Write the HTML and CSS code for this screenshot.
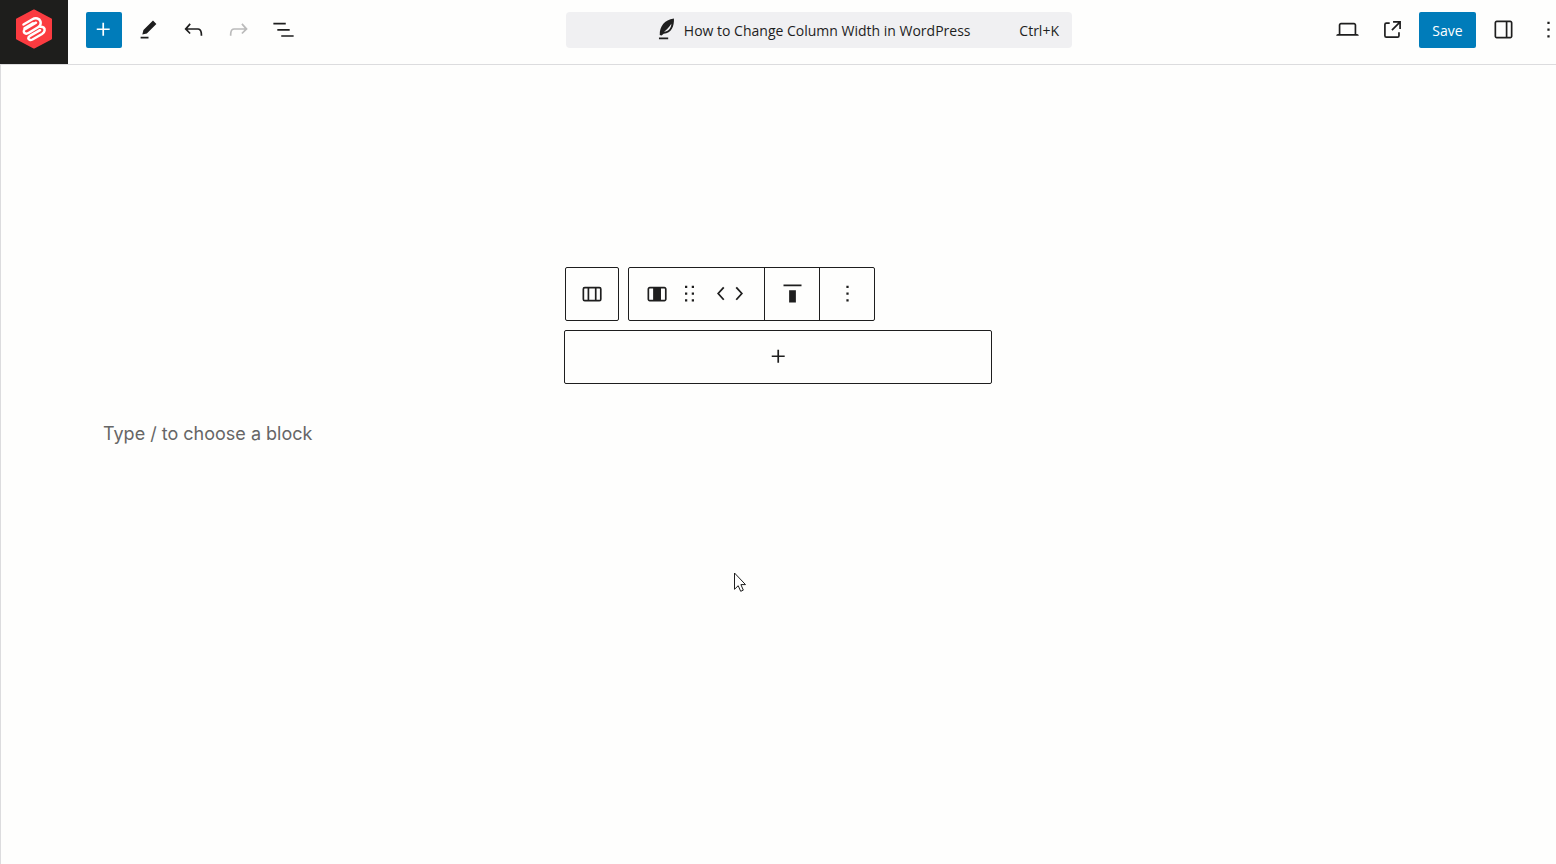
FILE: index.html
```
<!DOCTYPE html>
<html lang="en">
<head>
<meta charset="UTF-8">
<meta name="viewport" content="width=device-width, initial-scale=1">
<title>How to Change Column Width in WordPress</title>
<link rel="stylesheet" href="styles.css">
</head>
<body>

<header class="header">
    <a class="logo" href="#" aria-label="View posts">
        <svg viewBox="0 0 40 40" width="40" height="40">
            <path fill="#fb3b40" stroke="#fb3b40" stroke-width="2" stroke-linejoin="round" d="M20 1.500 37 10.500V29.500L20 38.500 3 29.500V10.500z"/>
            <path fill="none" stroke="#fff" stroke-width="2.500" stroke-linecap="round" stroke-linejoin="round" d="M9.500 15.500 18 10.500C22 8.300 25.500 9.500 26.500 12.500C27.200 15 26 17 24 18.200L14.500 24C12.500 25.200 10.200 24.600 9.800 22.800C9.500 21.400 10.300 20.600 11.500 19.800L22 13.700M10.500 19.300 19 14.200M26 17.700C29 17.300 31 19 30.600 21.500C30.300 23.300 29.300 24.200 28 25L18.500 30.500C16.500 31.500 14.500 30.800 14.300 29.300C14.200 28.200 15 27.500 16 26.900L26 21.200"/>
        </svg>
    </a>
    <div class="tools">
        <button class="btn primary" aria-label="Add block"><svg viewBox="0 0 24 24"><path d="M11 12.500V17.500H12.500V12.500H17.500V11H12.500V6H11V11H6V12.500H11Z"/></svg></button>
        <button class="btn" aria-label="Tools"><svg viewBox="0 0 24 24"><path d="m19 7-3-3-8.500 8.500-1 4 4-1L19 7Zm-7 11.500H5V20h7v-1.500Z"/></svg></button>
        <button class="btn" aria-label="Undo"><svg viewBox="0 0 24 24"><path d="M18.300 11.700c-.6-.6-1.400-.9-2.300-.9H6.700l2.900-3.300-1.100-1-4.500 5L8.500 16l1-1-2.700-2.700H16c.5 0 .9.2 1.300.5 1 1 1 3.400 1 4.500v.3h1.500v-.2c0-1.500 0-4.300-1.500-5.700z"/></svg></button>
        <button class="btn" aria-label="Redo" disabled><svg viewBox="0 0 24 24"><path d="M15.600 6.500l-1.100 1 2.900 3.300H8c-.9 0-1.700.3-2.300.9-1.400 1.500-1.400 4.200-1.400 5.600v.2h1.500v-.3c0-1.100 0-3.500 1-4.500.3-.3.7-.5 1.300-.5h9.200L14.500 15l1.100 1.100 4.600-4.600-4.600-5z"/></svg></button>
        <button class="btn" aria-label="List view"><svg viewBox="0 0 24 24"><path d="M3 6h11v1.500H3V6Zm3.500 5.500h11V13h-11v-1.500ZM21 17H10v1.500h11V17Z"/></svg></button>
    </div>
    <button class="command">
        <span class="title">
            <svg viewBox="0 0 24 24"><path fill-rule="evenodd" d="M6 16.800C5.800 9.500 10 3.500 18.600 2.300C19 9 16.500 15.500 9.500 15.800L7.600 17.300zM9.800 14C11.500 12.500 14 10.500 16.300 6.800C16.300 10.300 13.800 13.700 9.800 14zM5.300 19.200h8.200v1.500H5.300z"/></svg>
            How to Change Column Width in WordPress
        </span>
        <span class="shortcut">Ctrl+K</span>
    </button>
    <div class="actions">
        <button class="btn" aria-label="View"><svg viewBox="0 0 24 24"><path d="M20.500 16h-.7V8c0-1.100-.9-2-2-2H6.200c-1.100 0-2 .9-2 2v8h-.7c-.8 0-1.500.7-1.500 1.500h20c0-.8-.7-1.500-1.500-1.500zM5.700 8c0-.3.2-.5.5-.5h11.600c.3 0 .5.2.5.5v8H5.700V8z"/></svg></button>
        <a class="btn" href="#" aria-label="View page"><svg viewBox="0 0 24 24"><path d="M19.500 4.500h-7V6h4.440l-5.970 5.970 1.060 1.060L18 7.060v4.440h1.500v-7Zm-13 1a2 2 0 0 0-2 2v10a2 2 0 0 0 2 2h10a2 2 0 0 0 2-2v-3H17v3a.5.5 0 0 1-.5.5h-10a.5.5 0 0 1-.5-.5v-10a.5.5 0 0 1 .5-.5h3V5.500h-3Z"/></svg></a>
        <button class="btn primary save">Save</button>
        <button class="btn" aria-label="Settings"><svg viewBox="0 0 24 24"><path d="M18 4H6c-1.100 0-2 .9-2 2v12c0 1.100.9 2 2 2h12c1.100 0 2-.9 2-2V6c0-1.100-.9-2-2-2zm-4 14.500H6c-.3 0-.5-.2-.5-.5V6c0-.3.2-.5.5-.5h8v13zm4.500-.5c0 .3-.2.5-.5.5h-2.500v-13H18c.3 0 .5.2.5.5v12z"/></svg></button>
        <button class="btn" aria-label="Options"><svg viewBox="0 0 24 24"><path d="M13 19h-2v-2h2v2zm0-6h-2v-2h2v2zm0-6h-2V5h2v2z"/></svg></button>
    </div>
</header>

<main class="canvas">
    <div class="columns">
        <div class="column">
            <div class="toolbar">
                <div class="group">
                    <button class="cell" aria-label="Select parent block: Columns"><svg viewBox="0 0 24 24"><path fill-rule="evenodd" d="M15 7.500h-5v10h5v-10Zm1.500 0v10H19a.5.5 0 0 0 .5-.5V8a.5.5 0 0 0-.5-.5h-2.500ZM6 7.500h2.500v10H6a.5.5 0 0 1-.5-.5V8a.5.5 0 0 1 .5-.5ZM6 6h13a2 2 0 0 1 2 2v9a2 2 0 0 1-2 2H6a2 2 0 0 1-2-2V8a2 2 0 0 1 2-2Z"/></svg></button>
                </div>
                <div class="group">
                    <div class="block-tools">
                        <button aria-label="Column"><svg viewBox="0 0 24 24"><path d="M19 6H6c-1.100 0-2 .9-2 2v9c0 1.100.9 2 2 2h13c1.100 0 2-.9 2-2V8c0-1.100-.9-2-2-2zM6 17.500c-.3 0-.5-.2-.5-.5V8c0-.3.2-.5.5-.5h3v10H6zm13.500-.5c0 .3-.2.5-.5.5h-3v-10h3c.3 0 .5.2.5.5v9z"/></svg></button>
                        <button aria-label="Drag"><svg viewBox="0 0 24 24"><path d="M8 7h2V5H8v2zm0 6h2v-2H8v2zm0 6h2v-2H8v2zm6-14v2h2V5h-2zm0 8h2v-2h-2v2zm0 6h2v-2h-2v2z"/></svg></button>
                        <div class="movers">
                            <button aria-label="Move left"><svg viewBox="0 0 24 24"><path d="M14.600 7l-1.200-1L8 12l5.400 6 1.200-1-4.600-5z"/></svg></button>
                            <button aria-label="Move right"><svg viewBox="0 0 24 24"><path d="M10.600 6L9.400 7l4.600 5-4.600 5 1.200 1 5.400-6z"/></svg></button>
                        </div>
                    </div>
                    <button class="cell" aria-label="Align top"><svg viewBox="0 0 24 24"><path d="M9 20h6V9H9v11zM4 4v1.500h16V4H4z"/></svg></button>
                    <button class="cell" aria-label="Options"><svg viewBox="0 0 24 24"><path d="M13 19h-2v-2h2v2zm0-6h-2v-2h2v2zm0-6h-2V5h2v2z"/></svg></button>
                </div>
            </div>
            <button class="appender" aria-label="Add block"><svg viewBox="0 0 24 24"><path d="M11 12.500V17.500H12.500V12.500H17.500V11H12.500V6H11V11H6V12.500H11Z"/></svg></button>
        </div>
    </div>
    <input class="paragraph" type="text" placeholder="Type / to choose a block" aria-label="Empty block">
</main>

<svg class="cursor" viewBox="0 0 12 20" width="12" height="20"><path fill="#fff" stroke="#1e1e1e" d="M.5 1V17.300L4.200 13.700 6.700 19.300 9.300 18.100 6.900 12.600H11.500z"/></svg>

</body>
</html>
```
FILE: styles.css
```
* {
    box-sizing: border-box;
}
body {
    margin: 0;
    min-height: 100vh;
    display: flex;
    flex-direction: column;
    overflow: hidden;
    background: #fefefd;
    color: #1e1e1e;
    font: 14px/20px "Segoe UI", "Open Sans", "Noto Sans", sans-serif;
}
button {
    margin: 0;
    padding: 0;
    border: 0;
    background: none;
    color: inherit;
    font: inherit;
    cursor: pointer;
}
svg {
    flex: none;
    fill: currentColor;
}

/* top bar */
.header {
    display: grid;
    grid-template-columns: 72px 1fr 506px 1fr;
    height: 65px;
    margin-right: -10px;
    border-bottom: 1px solid #dcdcde;
}
.logo {
    display: flex;
    justify-content: center;
    width: 68px;
    padding-top: 9px;
    background: #1e1e1c;
}
.tools,
.actions {
    display: flex;
    gap: 9px;
    padding-top: 12px;
}
.tools {
    padding-left: 14px;
}
.actions {
    justify-content: flex-end;
}
.btn {
    display: flex;
    align-items: center;
    justify-content: center;
    width: 36px;
    height: 36px;
    border-radius: 2px;
    color: inherit;
}
.btn svg,
.title svg,
.toolbar svg,
.appender svg {
    width: 27px;
    height: 27px;
    margin-bottom: 1px;
}
.tools svg {
    margin-right: 1px;
}
.btn:disabled {
    color: #bbb;
}
.primary {
    background: #007cba;
    color: #fff;
}
.save {
    width: 57px;
    padding-top: 2px;
}
.command {
    display: flex;
    align-items: center;
    height: 36px;
    margin-top: 12px;
    padding: 2px 13px 0 38px;
    border-radius: 4px;
    background: #f0f0f2;
}
.title {
    flex: 1;
    display: flex;
    align-items: center;
    justify-content: center;
    gap: 4px;
}
.title svg {
    margin-bottom: 4px;
}

/* editor */
.canvas {
    flex: 1;
    padding: 202px 103px 0 102px;
    border-left: 1px solid #dcdcde;
}
.columns {
    display: grid;
    grid-template-columns: repeat(3, 1fr);
    gap: 33px;
}
.column {
    grid-column: 2;
}
.toolbar {
    display: flex;
    gap: 9px;
    margin-bottom: 9px;
    padding-left: 1px;
}
.group {
    display: flex;
    height: 54px;
    border: 1px solid #1e1e1e;
    border-radius: 2px;
}
.toolbar button {
    display: flex;
    align-items: center;
    justify-content: center;
}
.toolbar .cell {
    width: 54px;
}
.group:first-child .cell {
    width: 52px;
    padding-right: 1px;
}
.block-tools {
    display: flex;
    gap: 6px;
    padding: 0 17px 0 14px;
}
.block-tools + .cell,
.cell + .cell {
    box-sizing: content-box;
    border-left: 1px solid #1e1e1e;
}
.movers {
    display: flex;
    margin-left: 4px;
}
.movers button {
    width: 17px;
}
.appender {
    display: flex;
    align-items: center;
    justify-content: center;
    width: 100%;
    height: 54px;
    border: 1px solid #1e1e1e;
    border-radius: 2px;
}
.paragraph {
    display: block;
    width: 100%;
    margin-top: 36px;
    padding: 0;
    border: 0;
    outline: 0;
    background: none;
    color: #1e1e1e;
    font: 18px/28px Inter, sans-serif;
}
.paragraph::placeholder {
    color: #666;
    opacity: 1;
}

/* pointer */
.cursor {
    position: absolute;
    left: 734px;
    top: 572px;
}
```
